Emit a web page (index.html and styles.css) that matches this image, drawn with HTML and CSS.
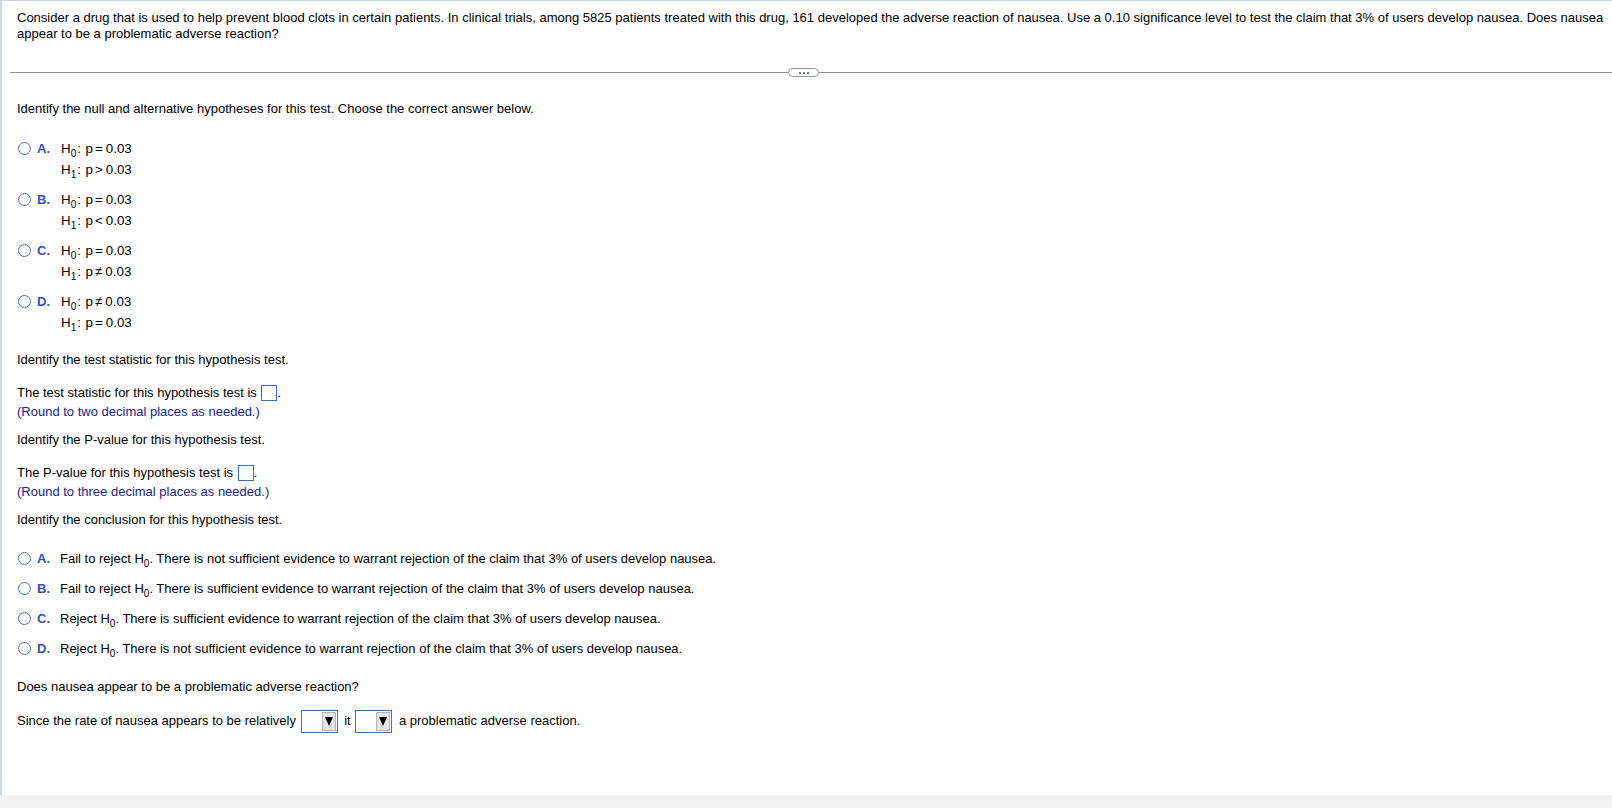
FILE: index.html
```html
<!DOCTYPE html>
<html lang="en">
<head>
<meta charset="utf-8">
<title>Hypothesis test</title>
<link rel="stylesheet" href="styles.css">
</head>
<body>
<div class="page">
  <p class="question">Consider a drug that is used to help prevent blood clots in certain patients. In clinical trials, among 5825 patients treated with this drug, 161 developed the adverse reaction of nausea. Use a 0.10 significance level to test the claim that 3% of users develop nausea. Does nausea<br>appear to be a problematic adverse reaction?</p>

  <div class="divider">
    <span class="rule rule-left"></span>
    <span class="pill"><span class="dot"></span><span class="dot"></span><span class="dot"></span></span>
    <span class="rule rule-right"></span>
  </div>

  <div class="work">
    <p class="prompt first">Identify the null and alternative hypotheses for this test. Choose the correct answer below.</p>

    <ul class="hyp-list">
      <li class="hyp">
        <span class="radio"></span><span class="letter">A.</span>
        <span class="hyp-lines">
          <span class="hl">H<sub>0</sub>: <span class="var">p</span><span class="op">=</span>0.03</span>
          <span class="hl">H<sub>1</sub>: <span class="var">p</span><span class="op">&gt;</span>0.03</span>
        </span>
      </li>
      <li class="hyp">
        <span class="radio"></span><span class="letter">B.</span>
        <span class="hyp-lines">
          <span class="hl">H<sub>0</sub>: <span class="var">p</span><span class="op">=</span>0.03</span>
          <span class="hl">H<sub>1</sub>: <span class="var">p</span><span class="op">&lt;</span>0.03</span>
        </span>
      </li>
      <li class="hyp">
        <span class="radio"></span><span class="letter">C.</span>
        <span class="hyp-lines">
          <span class="hl">H<sub>0</sub>: <span class="var">p</span><span class="op">=</span>0.03</span>
          <span class="hl">H<sub>1</sub>: <span class="var">p</span><span class="op">&ne;</span>0.03</span>
        </span>
      </li>
      <li class="hyp">
        <span class="radio"></span><span class="letter">D.</span>
        <span class="hyp-lines">
          <span class="hl">H<sub>0</sub>: <span class="var">p</span><span class="op">&ne;</span>0.03</span>
          <span class="hl">H<sub>1</sub>: <span class="var">p</span><span class="op">=</span>0.03</span>
        </span>
      </li>
    </ul>

    <p class="prompt after-hyp">Identify the test statistic for this hypothesis test.</p>
    <p class="answer-line">The test statistic for this hypothesis test is <span class="blank"></span>.</p>
    <p class="hint">(Round to two decimal places as needed.)</p>

    <p class="prompt after-hint">Identify the P-value for this hypothesis test.</p>
    <p class="answer-line">The P-value for this hypothesis test is <span class="blank"></span>.</p>
    <p class="hint">(Round to three decimal places as needed.)</p>

    <p class="prompt after-hint">Identify the conclusion for this hypothesis test.</p>

    <ul class="conc-list">
      <li class="conc"><span class="radio"></span><span class="letter">A.</span><span class="conc-text">Fail to reject H<sub>0</sub>. There is not sufficient evidence to warrant rejection of the claim that 3% of users develop nausea.</span></li>
      <li class="conc"><span class="radio"></span><span class="letter">B.</span><span class="conc-text">Fail to reject H<sub>0</sub>. There is sufficient evidence to warrant rejection of the claim that 3% of users develop nausea.</span></li>
      <li class="conc"><span class="radio"></span><span class="letter">C.</span><span class="conc-text">Reject H<sub>0</sub>. There is sufficient evidence to warrant rejection of the claim that 3% of users develop nausea.</span></li>
      <li class="conc"><span class="radio"></span><span class="letter">D.</span><span class="conc-text">Reject H<sub>0</sub>. There is not sufficient evidence to warrant rejection of the claim that 3% of users develop nausea.</span></li>
    </ul>

    <p class="prompt after-conc">Does nausea appear to be a problematic adverse reaction?</p>
    <p class="select-line">Since the rate of nausea appears to be relatively <span class="dropdown"><span class="drop-btn"><span class="tri"></span></span></span> it <span class="dropdown"><span class="drop-btn"><span class="tri"></span></span></span> a problematic adverse reaction.</p>
  </div>
</div>
<div class="footer"></div>
</body>
</html>
```

FILE: styles.css
```css
html, body {
  margin: 0;
  padding: 0;
  background: #ffffff;
}

body {
  font-family: "Liberation Sans", Arial, sans-serif;
  font-size: 13px;
  color: #000000;
}

.page {
  height: 795px;
  border-top: 1px solid #cdd5e1;
  border-left: 2px solid #cdd5e1;
  box-sizing: border-box;
  overflow: hidden;
}

.footer {
  height: 13px;
  background: #f2f2f2;
}

p {
  margin: 0;
}

.question {
  padding: 9px 2px 0 15px;
  line-height: 16px;
}

/* divider with pill */
.divider {
  display: flex;
  align-items: center;
  height: 9px;
  margin-top: 26px;
  padding-left: 8px;
}

.rule {
  height: 1px;
  background: #8c919a;
}

.rule-left {
  width: 778px;
}

.rule-right {
  flex: 1;
}

.pill {
  display: flex;
  align-items: center;
  justify-content: center;
  gap: 2px;
  width: 29px;
  height: 7px;
  border: 1px solid #8c919a;
  border-radius: 5px;
  background: #ffffff;
}

.dot {
  width: 2px;
  height: 2px;
  background: #6f747c;
}

/* main work area */
.work {
  padding-left: 15px;
}

.prompt {
  line-height: 16px;
}

.prompt.first {
  margin-top: 24px;
}

.hint {
  line-height: 19px;
  color: #23238c;
}

.answer-line {
  line-height: 19px;
  margin-top: 15px;
}

.prompt.after-hyp {
  margin-top: 19px;
}

.prompt.after-hint {
  margin-top: 11px;
}

.prompt.after-conc {
  margin-top: 21px;
}

.blank {
  display: inline-block;
  width: 14px;
  height: 14px;
  border: 1px solid #3a6bce;
  vertical-align: -4px;
  margin-left: 1px;
}

ul {
  list-style: none;
  margin: 0;
  padding: 0;
}

.radio {
  flex: none;
  box-sizing: border-box;
  width: 13px;
  height: 13px;
  border: 1px solid #4a6fd2;
  border-radius: 50%;
  margin-left: 1px;
}

.letter {
  flex: none;
  color: #3450bf;
  font-weight: bold;
}

.hyp-list {
  margin-top: 21px;
}

.hyp {
  display: flex;
  align-items: flex-start;
  margin-bottom: 9px;
}

.hyp:last-child {
  margin-bottom: 0;
}

.hyp .radio {
  margin-top: 4px;
}

.hyp .letter {
  width: 24px;
  margin-left: 6px;
  line-height: 21px;
}

.hyp-lines {
  display: flex;
  flex-direction: column;
  font-size: 13.33px;
}

.hl {
  line-height: 21px;
}

.hl sub {
  margin-right: 1px;
}

.var {
  margin-left: 1px;
}

.op {
  margin: 0 3px 0 2px;
}

sub {
  font-size: 10px;
  line-height: 0;
  vertical-align: -4px;
}

.conc-list {
  margin-top: 20px;
}

.conc {
  display: flex;
  align-items: center;
  height: 20px;
  margin-bottom: 10px;
}

.conc:last-child {
  margin-bottom: 0;
}

.conc .letter {
  width: 23px;
  margin-left: 6px;
}

.select-line {
  margin-top: 15px;
  line-height: 22px;
}

.dropdown {
  display: inline-flex;
  justify-content: flex-end;
  align-items: center;
  box-sizing: border-box;
  width: 37px;
  height: 23px;
  border: 1px solid #3a6bce;
  padding: 1px;
  vertical-align: middle;
  margin: 0 3px 0 1px;
}

.drop-btn {
  display: flex;
  align-items: center;
  justify-content: center;
  box-sizing: border-box;
  width: 14px;
  height: 19px;
  background: #e6e6e6;
  border: 1px solid #b3b3b3;
}

.tri {
  width: 0;
  height: 0;
  border-left: 4px solid transparent;
  border-right: 4px solid transparent;
  border-top: 9px solid #000000;
}
```
